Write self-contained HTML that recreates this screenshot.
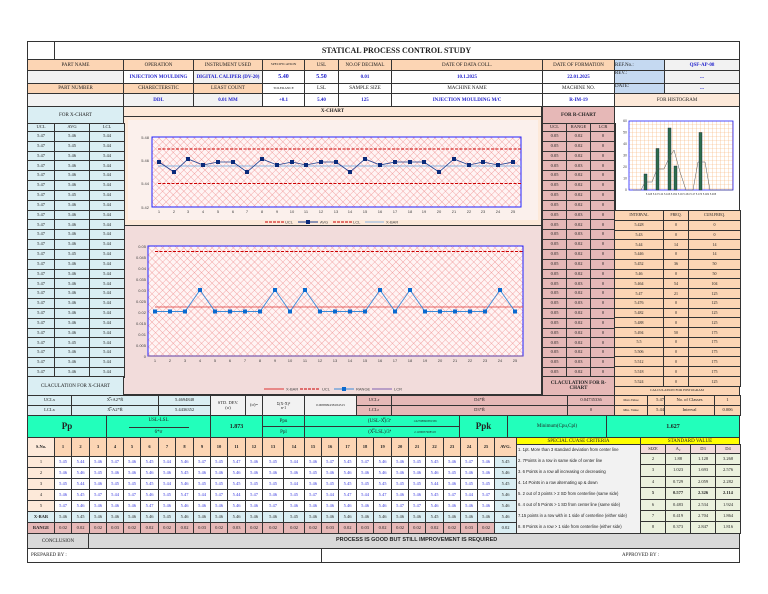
<!DOCTYPE html>
<html><head><meta charset="utf-8">
<style>
*{margin:0;padding:0;box-sizing:border-box}
body{width:768px;height:594px;background:#fff;font-family:"Liberation Serif",serif;position:relative;overflow:hidden;color:#222}
.a{position:absolute;border:1px solid #333;display:flex;align-items:center;justify-content:center;text-align:center;font-size:5px;line-height:1}
.b{color:#2222cc;font-weight:bold}
table{border-collapse:collapse;table-layout:fixed;position:absolute}
td{border:1px solid #333;font-size:4.5px;text-align:center;padding:0;overflow:hidden;white-space:nowrap;line-height:1}
.pe{background:#fcd5b4}.gy{background:#f2f2f2}.lb{background:#daeef3}.pk{background:#e6b8b7}
.gr{background:#22ffbb}.ye{background:#ffff00}.sv{background:#ebf1de}.bl{background:#c5d9f1}
.dv td{color:#3333dd}
.h td{font-size:4px}
</style></head><body>
<div style="position:absolute;left:27px;top:41px;width:713px;height:522px;border:1px solid #444"></div>
<div class="a" style="left:27px;top:41px;width:28px;height:19px"></div>
<div class="a" style="left:54px;top:41px;width:686px;height:19px;font-size:8px;font-weight:bold;border-left:none">STATICAL PROCESS CONTROL STUDY</div>
<div class="a pe" style="left:27px;top:59px;width:97px;height:12px">PART NAME</div>
<div class="a pe" style="left:123px;top:59px;width:71px;height:12px">OPERATION</div>
<div class="a pe" style="left:193px;top:59px;width:70px;height:12px">INSTRUMENT USED</div>
<div class="a pe" style="left:262px;top:59px;width:43px;height:12px;font-size:3.5px">SPECIFICATION</div>
<div class="a pe" style="left:304px;top:59px;width:35px;height:12px">USL</div>
<div class="a pe" style="left:338px;top:59px;width:54px;height:12px">NO.OF DECIMAL</div>
<div class="a pe" style="left:391px;top:59px;width:152px;height:12px">DATE OF DATA COLL.</div>
<div class="a pe" style="left:542px;top:59px;width:73px;height:12px">DATE OF FORMATION</div>
<div class="a bl" style="left:614px;top:59px;width:51px;height:12px;justify-content:flex-start">REF.No.:</div>
<div class="a gy b" style="left:664px;top:59px;width:76px;height:12px">QSF-AP-08</div>

<div class="a gy" style="left:27px;top:70px;width:97px;height:14px"></div>
<div class="a b" style="left:123px;top:70px;width:71px;height:14px">INJECTION MOULDING</div>
<div class="a gy b" style="left:193px;top:70px;width:70px;height:14px">DIGITAL CALIPER (DV-20)</div>
<div class="a b" style="left:262px;top:70px;width:43px;height:14px;font-size:6px">5.40</div>
<div class="a b" style="left:304px;top:70px;width:35px;height:14px;font-size:6px">5.50</div>
<div class="a b" style="left:338px;top:70px;width:54px;height:14px">0.01</div>
<div class="a b" style="left:391px;top:70px;width:152px;height:14px">10.1.2025</div>
<div class="a b" style="left:542px;top:70px;width:73px;height:14px">22.01.2025</div>
<div class="a bl" style="left:614px;top:70px;width:51px;height:14px;justify-content:flex-start;align-items:flex-start">REV.:</div>
<div class="a gy b" style="left:664px;top:70px;width:76px;height:14px">...</div>

<div class="a pe" style="left:27px;top:83px;width:97px;height:11px">PART NUMBER</div>
<div class="a pe" style="left:123px;top:83px;width:71px;height:11px">CHARECTERSTIC</div>
<div class="a pe" style="left:193px;top:83px;width:70px;height:11px">LEAST COUNT</div>
<div class="a" style="left:262px;top:83px;width:43px;height:11px;font-size:3.5px">TOLERANCE</div>
<div class="a" style="left:304px;top:83px;width:35px;height:11px">LSL</div>
<div class="a" style="left:338px;top:83px;width:54px;height:11px">SAMPLE SIZE</div>
<div class="a" style="left:391px;top:83px;width:152px;height:11px">MACHINE NAME</div>
<div class="a" style="left:542px;top:83px;width:73px;height:11px">MACHINE NO.</div>
<div class="a bl" style="left:614px;top:83px;width:51px;height:11px;justify-content:flex-start;align-items:flex-start">DATE:</div>
<div class="a gy b" style="left:664px;top:83px;width:76px;height:11px">...</div>

<div class="a gy" style="left:27px;top:93px;width:97px;height:14px"></div>
<div class="a gy b" style="left:123px;top:93px;width:71px;height:14px">DDL</div>
<div class="a gy b" style="left:193px;top:93px;width:70px;height:14px">0.01 MM</div>
<div class="a b" style="left:262px;top:93px;width:43px;height:14px">+0.1</div>
<div class="a b" style="left:304px;top:93px;width:35px;height:14px">5.40</div>
<div class="a b" style="left:338px;top:93px;width:54px;height:14px">125</div>
<div class="a b" style="left:391px;top:93px;width:152px;height:14px">INJECTION MOULDING M/C</div>
<div class="a b" style="left:542px;top:93px;width:73px;height:14px">R-IM-19</div>
<div class="a pe" style="left:614px;top:93px;width:126px;height:14px;background:#fde9d9">FOR HISTOGRAM</div>

<div style="position:absolute;left:123px;top:106px;width:419px;height:120px;background:#fde9d9;border:1px solid #333"></div>
<div class="a" style="left:123px;top:106px;width:419px;height:11px;background:#fde9d9;font-weight:bold;border-bottom:1px solid #333">X-CHART</div>
<div style="position:absolute;left:123px;top:225px;width:419px;height:170px;background:#f2dcdb;border:1px solid #333"></div>
<svg style="position:absolute;left:0;top:0" width="768" height="594">
<defs>
<pattern id="h" width="5" height="5" patternUnits="userSpaceOnUse" patternTransform="rotate(45)">
<rect width="5" height="5" fill="#fff4f4"/><path d="M0 0V5M0 0H5" stroke="#e88" stroke-width="0.7"/></pattern>
<pattern id="g" width="4" height="4" patternUnits="userSpaceOnUse">
<rect width="4" height="4" fill="#fff"/><path d="M0 0V4M0 0H4" stroke="#f8b070" stroke-width="0.6"/></pattern>
</defs>
<rect x="128" y="120" width="410" height="100" fill="#fbf0ec"/>
<rect x="152" y="137" width="369" height="70" fill="url(#h)" stroke="#22f" stroke-width="1"/>
<g font-size="4" font-family="Liberation Sans" fill="#444" text-anchor="end">
<text x="149" y="139">5.48</text><text x="149" y="162">5.46</text><text x="149" y="185">5.44</text><text x="149" y="209">5.42</text></g>
<line x1="158" y1="149" x2="521" y2="149" stroke="#c00" stroke-dasharray="3,1.5"/>
<line x1="158" y1="183.5" x2="521" y2="183.5" stroke="#c00" stroke-dasharray="3,1.5"/>
<line x1="158" y1="166" x2="521" y2="166" stroke="#8ab4e0"/>
<polyline fill="none" stroke="#1f3f8f" stroke-width="0.8" points="159,162 174,172 188,159 203,165 218,162 233,162 247,172 262,159 277,165 292,162 306,165 321,162 336,162 350,172 365,159 380,165 395,162 410,162 424,162 439,172 454,159 469,165 483,162 498,165 513,162"/>
<g fill="#0a2a7a">
<rect x="157" y="160" width="4" height="4"/><rect x="172" y="170" width="4" height="4"/><rect x="186" y="157" width="4" height="4"/><rect x="201" y="163" width="4" height="4"/><rect x="216" y="160" width="4" height="4"/><rect x="231" y="160" width="4" height="4"/><rect x="245" y="170" width="4" height="4"/><rect x="260" y="157" width="4" height="4"/><rect x="275" y="163" width="4" height="4"/><rect x="290" y="160" width="4" height="4"/><rect x="304" y="163" width="4" height="4"/><rect x="319" y="160" width="4" height="4"/><rect x="334" y="160" width="4" height="4"/><rect x="348" y="170" width="4" height="4"/><rect x="363" y="157" width="4" height="4"/><rect x="378" y="163" width="4" height="4"/><rect x="393" y="160" width="4" height="4"/><rect x="408" y="160" width="4" height="4"/><rect x="422" y="160" width="4" height="4"/><rect x="437" y="170" width="4" height="4"/><rect x="452" y="157" width="4" height="4"/><rect x="467" y="163" width="4" height="4"/><rect x="481" y="160" width="4" height="4"/><rect x="496" y="163" width="4" height="4"/><rect x="511" y="160" width="4" height="4"/></g>
<g font-size="4" font-family="Liberation Sans" fill="#444" text-anchor="middle">
<text x="159" y="213">1</text><text x="174" y="213">2</text><text x="188" y="213">3</text><text x="203" y="213">4</text><text x="218" y="213">5</text><text x="233" y="213">6</text><text x="247" y="213">7</text><text x="262" y="213">8</text><text x="277" y="213">9</text><text x="292" y="213">10</text><text x="306" y="213">11</text><text x="321" y="213">12</text><text x="336" y="213">13</text><text x="350" y="213">14</text><text x="365" y="213">15</text><text x="380" y="213">16</text><text x="395" y="213">17</text><text x="410" y="213">18</text><text x="424" y="213">19</text><text x="439" y="213">20</text><text x="454" y="213">21</text><text x="469" y="213">22</text><text x="483" y="213">23</text><text x="498" y="213">24</text><text x="513" y="213">25</text></g>
<g font-size="4" font-family="Liberation Sans" fill="#444">
<line x1="265" y1="222" x2="284" y2="222" stroke="#c00" stroke-dasharray="3,1"/><text x="285" y="223.5">UCL</text>
<line x1="298" y1="222" x2="318" y2="222" stroke="#1f3f8f"/><rect x="306" y="220" width="4" height="4" fill="#0a2a7a"/><text x="320" y="223.5">AVG</text>
<line x1="333" y1="222" x2="352" y2="222" stroke="#c00" stroke-dasharray="3,1"/><text x="353" y="223.5">LCL</text>
<line x1="365" y1="222" x2="384" y2="222" stroke="#8ab4e0"/><text x="386" y="223.5">X-BAR</text></g>

<rect x="148" y="246" width="375" height="110" fill="url(#h)" stroke="#22f" stroke-width="1"/>
<line x1="148" y1="356" x2="523" y2="356" stroke="#8060b0" stroke-width="1.2"/>
<g font-size="4" font-family="Liberation Sans" fill="#444" text-anchor="end">
<text x="146" y="248">0.05</text><text x="146" y="259">0.045</text><text x="146" y="270">0.04</text><text x="146" y="281">0.035</text><text x="146" y="292">0.03</text><text x="146" y="303">0.025</text><text x="146" y="314">0.02</text><text x="146" y="325">0.015</text><text x="146" y="336">0.01</text><text x="146" y="347">0.005</text><text x="146" y="358">0</text></g>
<line x1="155" y1="251.5" x2="523" y2="251.5" stroke="#c00" stroke-dasharray="3,1.5"/>
<line x1="155" y1="307" x2="523" y2="307" stroke="#d33" stroke-width="0.8"/>
<polyline fill="none" stroke="#3a8ad8" stroke-width="0.9" points="155,311.5 170,311.5 185,311.5 200,290 215,311.5 230,311.5 245,311.5 260,311.5 275,290 290,311.5 305,290 320,311.5 335,311.5 350,311.5 365,311.5 380,290 395,311.5 410,290 425,311.5 440,311.5 455,311.5 470,311.5 485,311.5 500,290 515,311.5"/>
<g fill="#0a6ad0">
<rect x="153" y="309.5" width="4" height="4"/><rect x="168" y="309.5" width="4" height="4"/><rect x="183" y="309.5" width="4" height="4"/><rect x="198" y="288" width="4" height="4"/><rect x="213" y="309.5" width="4" height="4"/><rect x="228" y="309.5" width="4" height="4"/><rect x="243" y="309.5" width="4" height="4"/><rect x="258" y="309.5" width="4" height="4"/><rect x="273" y="288" width="4" height="4"/><rect x="288" y="309.5" width="4" height="4"/><rect x="303" y="288" width="4" height="4"/><rect x="318" y="309.5" width="4" height="4"/><rect x="333" y="309.5" width="4" height="4"/><rect x="348" y="309.5" width="4" height="4"/><rect x="363" y="309.5" width="4" height="4"/><rect x="378" y="288" width="4" height="4"/><rect x="393" y="309.5" width="4" height="4"/><rect x="408" y="288" width="4" height="4"/><rect x="423" y="309.5" width="4" height="4"/><rect x="438" y="309.5" width="4" height="4"/><rect x="453" y="309.5" width="4" height="4"/><rect x="468" y="309.5" width="4" height="4"/><rect x="483" y="309.5" width="4" height="4"/><rect x="498" y="288" width="4" height="4"/><rect x="513" y="309.5" width="4" height="4"/></g>
<g font-size="4" font-family="Liberation Sans" fill="#444" text-anchor="middle">
<text x="155" y="362">1</text><text x="170" y="362">2</text><text x="185" y="362">3</text><text x="200" y="362">4</text><text x="215" y="362">5</text><text x="230" y="362">6</text><text x="245" y="362">7</text><text x="260" y="362">8</text><text x="275" y="362">9</text><text x="290" y="362">10</text><text x="305" y="362">11</text><text x="320" y="362">12</text><text x="335" y="362">13</text><text x="350" y="362">14</text><text x="365" y="362">15</text><text x="380" y="362">16</text><text x="395" y="362">17</text><text x="410" y="362">18</text><text x="425" y="362">19</text><text x="440" y="362">20</text><text x="455" y="362">21</text><text x="470" y="362">22</text><text x="485" y="362">23</text><text x="500" y="362">24</text><text x="515" y="362">25</text></g>
<g font-size="4" font-family="Liberation Sans" fill="#444">
<line x1="264" y1="389" x2="284" y2="389" stroke="#d33"/><text x="286" y="390.5">X-BAR</text>
<line x1="300" y1="389" x2="320" y2="389" stroke="#c00" stroke-dasharray="3,1"/><text x="322" y="390.5">UCL</text>
<line x1="334" y1="389" x2="354" y2="389" stroke="#3a8ad8"/><rect x="342" y="387" width="4" height="4" fill="#0a6ad0"/><text x="356" y="390.5">RANGE</text>
<line x1="372" y1="389" x2="392" y2="389" stroke="#8060b0"/><text x="394" y="390.5">LCR</text></g>

<rect x="616" y="108" width="122" height="102" fill="#fff"/>
<rect x="629" y="121" width="104" height="69" fill="url(#g)" stroke="#22f" stroke-width="0.8"/>
<g font-size="3.5" font-family="Liberation Sans" fill="#444" text-anchor="end">
<text x="627" y="122">60</text><text x="627" y="133.5">50</text><text x="627" y="145">40</text><text x="627" y="156.5">30</text><text x="627" y="168">20</text><text x="627" y="179.5">10</text><text x="627" y="191">0</text></g>
<g fill="#2e6e4e" stroke="#123" stroke-width="0.4">
<rect x="644" y="174" width="3" height="16"/><rect x="656" y="148.5" width="3" height="41.5"/><rect x="668" y="128" width="3" height="62"/><rect x="674" y="166" width="3" height="24"/><rect x="699" y="132.5" width="3" height="57.5"/></g>
<polyline fill="none" stroke="#555" stroke-width="0.5" points="633,190 637,190 641,190 645,182 652,182 657,169 664,169 669,158 674,150 680,172 686,190 693,190 698,162 705,162 710,190 733,190"/>
<text x="681" y="195" font-size="2.5" font-family="Liberation Sans" fill="#444" text-anchor="middle">5.428 5.43 5.44 5.446 5.452 5.46 5.464 5.47 5.476 5.482 5.488</text>
</svg>

<div class="a lb" style="left:27px;top:106px;width:97px;height:18px">FOR X-CHART</div>
<table class="lb" style="left:27px;top:123px;width:97px"><colgroup><col style="width:27px"><col style="width:35px"><col style="width:35px"></colgroup>
<tr style="height:8px"><td>UCL</td><td>AVG</td><td>LCL</td></tr>
<tr style="height:9.84px"><td>5.47</td><td>5.46</td><td>5.44</td></tr><tr style="height:9.84px"><td>5.47</td><td>5.45</td><td>5.44</td></tr><tr style="height:9.84px"><td>5.47</td><td>5.46</td><td>5.44</td></tr><tr style="height:9.84px"><td>5.47</td><td>5.46</td><td>5.44</td></tr><tr style="height:9.84px"><td>5.47</td><td>5.46</td><td>5.44</td></tr><tr style="height:9.84px"><td>5.47</td><td>5.46</td><td>5.44</td></tr><tr style="height:9.84px"><td>5.47</td><td>5.45</td><td>5.44</td></tr><tr style="height:9.84px"><td>5.47</td><td>5.46</td><td>5.44</td></tr><tr style="height:9.84px"><td>5.47</td><td>5.46</td><td>5.44</td></tr><tr style="height:9.84px"><td>5.47</td><td>5.46</td><td>5.44</td></tr><tr style="height:9.84px"><td>5.47</td><td>5.46</td><td>5.44</td></tr><tr style="height:9.84px"><td>5.47</td><td>5.46</td><td>5.44</td></tr><tr style="height:9.84px"><td>5.47</td><td>5.45</td><td>5.44</td></tr><tr style="height:9.84px"><td>5.47</td><td>5.46</td><td>5.44</td></tr><tr style="height:9.84px"><td>5.47</td><td>5.46</td><td>5.44</td></tr><tr style="height:9.84px"><td>5.47</td><td>5.46</td><td>5.44</td></tr><tr style="height:9.84px"><td>5.47</td><td>5.46</td><td>5.44</td></tr><tr style="height:9.84px"><td>5.47</td><td>5.46</td><td>5.44</td></tr><tr style="height:9.84px"><td>5.47</td><td>5.46</td><td>5.44</td></tr><tr style="height:9.84px"><td>5.47</td><td>5.46</td><td>5.44</td></tr><tr style="height:9.84px"><td>5.47</td><td>5.46</td><td>5.44</td></tr><tr style="height:9.84px"><td>5.47</td><td>5.45</td><td>5.44</td></tr><tr style="height:9.84px"><td>5.47</td><td>5.46</td><td>5.44</td></tr><tr style="height:9.84px"><td>5.47</td><td>5.46</td><td>5.44</td></tr><tr style="height:9.84px"><td>5.47</td><td>5.46</td><td>5.44</td></tr></table>
<div class="a lb" style="left:27px;top:376px;width:97px;height:20px">CLACULATION FOR X-CHART</div>

<div class="a pk" style="left:542px;top:106px;width:73px;height:18px;font-weight:bold">FOR R-CHART</div>
<table class="pk" style="left:542px;top:123px;width:73px"><colgroup><col style="width:24px"><col style="width:24px"><col style="width:25px"></colgroup>
<tr style="height:8px"><td>UCL</td><td>RANGE</td><td>LCR</td></tr>
<tr style="height:9.84px"><td>0.05</td><td>0.02</td><td>0</td></tr><tr style="height:9.84px"><td>0.05</td><td>0.02</td><td>0</td></tr><tr style="height:9.84px"><td>0.05</td><td>0.02</td><td>0</td></tr><tr style="height:9.84px"><td>0.05</td><td>0.03</td><td>0</td></tr><tr style="height:9.84px"><td>0.05</td><td>0.02</td><td>0</td></tr><tr style="height:9.84px"><td>0.05</td><td>0.02</td><td>0</td></tr><tr style="height:9.84px"><td>0.05</td><td>0.02</td><td>0</td></tr><tr style="height:9.84px"><td>0.05</td><td>0.02</td><td>0</td></tr><tr style="height:9.84px"><td>0.05</td><td>0.03</td><td>0</td></tr><tr style="height:9.84px"><td>0.05</td><td>0.02</td><td>0</td></tr><tr style="height:9.84px"><td>0.05</td><td>0.03</td><td>0</td></tr><tr style="height:9.84px"><td>0.05</td><td>0.02</td><td>0</td></tr><tr style="height:9.84px"><td>0.05</td><td>0.02</td><td>0</td></tr><tr style="height:9.84px"><td>0.05</td><td>0.02</td><td>0</td></tr><tr style="height:9.84px"><td>0.05</td><td>0.02</td><td>0</td></tr><tr style="height:9.84px"><td>0.05</td><td>0.03</td><td>0</td></tr><tr style="height:9.84px"><td>0.05</td><td>0.02</td><td>0</td></tr><tr style="height:9.84px"><td>0.05</td><td>0.03</td><td>0</td></tr><tr style="height:9.84px"><td>0.05</td><td>0.02</td><td>0</td></tr><tr style="height:9.84px"><td>0.05</td><td>0.02</td><td>0</td></tr><tr style="height:9.84px"><td>0.05</td><td>0.02</td><td>0</td></tr><tr style="height:9.84px"><td>0.05</td><td>0.02</td><td>0</td></tr><tr style="height:9.84px"><td>0.05</td><td>0.02</td><td>0</td></tr><tr style="height:9.84px"><td>0.05</td><td>0.03</td><td>0</td></tr><tr style="height:9.84px"><td>0.05</td><td>0.02</td><td>0</td></tr></table>
<div class="a pk" style="left:542px;top:376px;width:73px;height:20px;font-weight:bold">CLACULATION FOR R-CHART</div>

<div style="position:absolute;left:614px;top:106px;width:126px;height:105px;border:1px solid #333"></div>
<table class="pe h" style="left:614px;top:210px;width:126px;height:177px"><colgroup><col style="width:49px"><col style="width:25px"><col style="width:52px"></colgroup>
<tr><td>INTERVAL</td><td>FREQ.</td><td>CUM.FREQ.</td></tr>
<tr><td>5.428</td><td>0</td><td>0</td></tr><tr><td>5.43</td><td>0</td><td>0</td></tr><tr><td>5.44</td><td>14</td><td>14</td></tr><tr><td>5.446</td><td>0</td><td>14</td></tr><tr><td>5.452</td><td>36</td><td>50</td></tr><tr><td>5.46</td><td>0</td><td>50</td></tr><tr><td>5.464</td><td>54</td><td>104</td></tr><tr><td>5.47</td><td>21</td><td>125</td></tr><tr><td>5.476</td><td>0</td><td>125</td></tr><tr><td>5.482</td><td>0</td><td>125</td></tr><tr><td>5.488</td><td>0</td><td>125</td></tr><tr><td>5.494</td><td>50</td><td>175</td></tr><tr><td>5.5</td><td>0</td><td>175</td></tr><tr><td>5.506</td><td>0</td><td>175</td></tr><tr><td>5.512</td><td>0</td><td>175</td></tr><tr><td>5.518</td><td>0</td><td>175</td></tr><tr><td>5.524</td><td>0</td><td>125</td></tr></table>
<div class="a pe" style="left:614px;top:386px;width:126px;height:10px;font-size:3.5px">CALCULATION FOR HISTOGRAM</div>

<table style="left:27px;top:395px;width:713px" class="lb">
<colgroup><col style="width:44px"><col style="width:87px"><col style="width:52px"><col style="width:35px"><col style="width:17px"><col style="width:42px"><col style="width:52px"><col style="width:35px"><col style="width:176px"><col style="width:47px"><col style="width:33px"><col style="width:17px"><col style="width:50px"><col style="width:26px"></colgroup>
<tr style="height:10px"><td>UCLx</td><td>X̿+A2*R̄</td><td>5.4694848</td><td rowspan="2" class="gy">STD. DEV.<br>(σ)</td><td rowspan="2" class="gy">(σ)=</td><td rowspan="2" class="gy" style="font-size:4px">Σ(X-X̄)²<br>n-1</td><td rowspan="2" class="gy" style="font-size:3.5px">0.008899438184515</td><td class="pk">UCLr</td><td class="pk">D4*R̄</td><td class="pk">0.04735336</td><td class="pe" style="font-size:3.5px">Max.Value</td><td class="pe" style="text-align:right">5.47</td><td class="pe">No. of Classes</td><td class="pe">1</td></tr>
<tr style="height:10px"><td>LCLx</td><td>X̿-A2*R̄</td><td>5.4436352</td><td class="pk">LCLr</td><td class="pk">D3*R̄</td><td class="pk">0</td><td class="pe" style="font-size:3.5px">Min. Value</td><td class="pe" style="text-align:right">5.44</td><td class="pe">Interval</td><td class="pe">0.006</td></tr>
</table>

<div class="a gr" style="left:27px;top:415px;width:80px;height:23px;font-size:9px;font-weight:bold">Pp</div>
<div class="a gr" style="left:106px;top:415px;width:105px;height:23px;font-size:5px;flex-direction:column;gap:4px"><span>USL-LSL</span><span style="border-top:0.5px solid #333;padding-top:2px;width:60px">6*σ</span></div>
<div class="a gr" style="left:210px;top:415px;width:53px;height:23px;font-weight:bold;font-size:6px">1.873</div>
<div class="a gr" style="left:262px;top:415px;width:43px;height:12px">Ppu</div>
<div class="a gr" style="left:262px;top:426px;width:43px;height:12px">Ppl</div>
<div class="a gr" style="left:304px;top:415px;width:155px;height:12px">(USL-X̿)/3*σ</div>
<div class="a gr" style="left:304px;top:426px;width:155px;height:12px">(X̿-LSL)/3*σ</div>
<div class="a gr" style="left:391px;top:415px;width:69px;height:12px;font-size:3px;border-left:none">1.62708690381336</div>
<div class="a gr" style="left:391px;top:426px;width:69px;height:12px;font-size:3px;border-left:none">2.1186857908518</div>
<div class="a gr" style="left:459px;top:415px;width:49px;height:23px;font-size:9px;font-weight:bold">Ppk</div>
<div class="a gr" style="left:507px;top:415px;width:100px;height:23px">Minimum(Cpu,Cpl)</div>
<div class="a gr" style="left:606px;top:415px;width:134px;height:23px;font-weight:bold;font-size:6px">1.627</div>

<table style="left:27px;top:437px;width:490px">
<colgroup><col style="width:27px"><col style="width:17px"><col style="width:18px"><col style="width:17px"><col style="width:17px"><col style="width:17px"><col style="width:18px"><col style="width:17px"><col style="width:18px"><col style="width:17px"><col style="width:17px"><col style="width:18px"><col style="width:17px"><col style="width:21px"><col style="width:21px"><col style="width:17px"><col style="width:17px"><col style="width:18px"><col style="width:17px"><col style="width:18px"><col style="width:17px"><col style="width:17px"><col style="width:18px"><col style="width:17px"><col style="width:17px"><col style="width:17px"><col style="width:22px"></colgroup>
<tr style="height:19px;font-weight:bold" class="pe"><td style="background:#fde9d9">S.No.</td><td>1</td><td>2</td><td>3</td><td>4</td><td>5</td><td>6</td><td>7</td><td>8</td><td>9</td><td>10</td><td>11</td><td>12</td><td>13</td><td>14</td><td>15</td><td>16</td><td>17</td><td>18</td><td>19</td><td>20</td><td>21</td><td>22</td><td>23</td><td>24</td><td>25</td><td>AVG.</td></tr>
<tr style="height:11px" class="dv"><td style="background:#fde9d9;color:#222">1</td><td>5.45</td><td>5.44</td><td>5.46</td><td>5.47</td><td>5.46</td><td>5.45</td><td>5.44</td><td>5.46</td><td>5.47</td><td>5.45</td><td>5.47</td><td>5.46</td><td>5.45</td><td>5.44</td><td>5.46</td><td>5.47</td><td>5.45</td><td>5.47</td><td>5.46</td><td>5.46</td><td>5.45</td><td>5.45</td><td>5.46</td><td>5.47</td><td>5.46</td><td class="lb" style="color:#222">5.45</td></tr>
<tr style="height:11px" class="dv"><td style="background:#fde9d9;color:#222">2</td><td>5.46</td><td>5.46</td><td>5.45</td><td>5.46</td><td>5.46</td><td>5.46</td><td>5.46</td><td>5.45</td><td>5.46</td><td>5.46</td><td>5.46</td><td>5.46</td><td>5.46</td><td>5.46</td><td>5.45</td><td>5.46</td><td>5.46</td><td>5.46</td><td>5.46</td><td>5.46</td><td>5.46</td><td>5.46</td><td>5.45</td><td>5.46</td><td>5.46</td><td class="lb" style="color:#222">5.46</td></tr>
<tr style="height:11px" class="dv"><td style="background:#fde9d9;color:#222">3</td><td>5.45</td><td>5.44</td><td>5.46</td><td>5.45</td><td>5.45</td><td>5.45</td><td>5.44</td><td>5.46</td><td>5.45</td><td>5.45</td><td>5.45</td><td>5.45</td><td>5.45</td><td>5.44</td><td>5.46</td><td>5.45</td><td>5.45</td><td>5.45</td><td>5.45</td><td>5.45</td><td>5.45</td><td>5.44</td><td>5.46</td><td>5.45</td><td>5.45</td><td class="lb" style="color:#222">5.45</td></tr>
<tr style="height:11px" class="dv"><td style="background:#fde9d9;color:#222">4</td><td>5.46</td><td>5.45</td><td>5.47</td><td>5.44</td><td>5.47</td><td>5.46</td><td>5.45</td><td>5.47</td><td>5.44</td><td>5.47</td><td>5.44</td><td>5.47</td><td>5.46</td><td>5.45</td><td>5.47</td><td>5.44</td><td>5.47</td><td>5.44</td><td>5.47</td><td>5.46</td><td>5.46</td><td>5.45</td><td>5.47</td><td>5.44</td><td>5.47</td><td class="lb" style="color:#222">5.46</td></tr>
<tr style="height:11px" class="dv"><td style="background:#fde9d9;color:#222">5</td><td>5.47</td><td>5.46</td><td>5.46</td><td>5.46</td><td>5.46</td><td>5.47</td><td>5.46</td><td>5.46</td><td>5.46</td><td>5.46</td><td>5.46</td><td>5.46</td><td>5.47</td><td>5.46</td><td>5.46</td><td>5.46</td><td>5.46</td><td>5.46</td><td>5.46</td><td>5.47</td><td>5.47</td><td>5.46</td><td>5.46</td><td>5.46</td><td>5.46</td><td class="lb" style="color:#222">5.46</td></tr>
<tr style="height:11px" class="lb"><td style="font-weight:bold">X-BAR</td><td>5.46</td><td>5.45</td><td>5.46</td><td>5.46</td><td>5.46</td><td>5.46</td><td>5.45</td><td>5.46</td><td>5.46</td><td>5.46</td><td>5.46</td><td>5.46</td><td>5.46</td><td>5.45</td><td>5.46</td><td>5.46</td><td>5.46</td><td>5.46</td><td>5.46</td><td>5.46</td><td>5.46</td><td>5.45</td><td>5.46</td><td>5.46</td><td>5.46</td><td>5.46</td></tr>
<tr style="height:12px" class="pk"><td style="font-weight:bold">RANGE</td><td>0.02</td><td>0.02</td><td>0.02</td><td>0.03</td><td>0.02</td><td>0.02</td><td>0.02</td><td>0.02</td><td>0.03</td><td>0.02</td><td>0.03</td><td>0.02</td><td>0.02</td><td>0.02</td><td>0.02</td><td>0.03</td><td>0.02</td><td>0.03</td><td>0.02</td><td>0.02</td><td>0.02</td><td>0.02</td><td>0.02</td><td>0.03</td><td>0.02</td><td class="lb">0.02</td></tr>
</table>

<div class="a ye" style="left:516px;top:437px;width:125px;height:8px">SPECIAL CUASE CRITERIA</div>
<div class="a gy" style="left:516px;top:444px;width:125px;height:90px;flex-direction:column;align-items:flex-start;justify-content:space-around;font-size:4.2px;font-family:'Liberation Sans',sans-serif;text-align:left;padding-left:1px">
<span>1. 1pt. More than 3 standard deviation from center line</span><span>2. 7Points in a row in same side of center line</span><span>3. 6 Points in a row all increasing or decreasing</span><span>4. 14 Points in a row alternating up &amp; down</span><span>5. 2 out of 3 points &gt; 2 SD from centerline (same side)</span><span>6. 4 out of 5 Points &gt; 1 SD from center line (same side)</span><span>7.15 points in a row with in 1 side of centerline (either side)</span><span>8. 8 Points in a row &gt; 1 side from centerline (either side)</span></div>
<div class="a ye" style="left:640px;top:437px;width:100px;height:8px">STANDARD VALUE</div>
<table class="sv" style="left:640px;top:444px;width:100px"><colgroup><col style="width:25px"><col style="width:25px"><col style="width:25px"><col style="width:25px"></colgroup>
<tr style="height:9px;background:#f2dcdb"><td>SIZE</td><td>A₂</td><td>D3</td><td>D4</td></tr>
<tr style="height:11.4px"><td>2</td><td>1.88</td><td>1.128</td><td>3.268</td></tr>
<tr style="height:11.4px"><td>3</td><td>1.023</td><td>1.693</td><td>2.576</td></tr>
<tr style="height:11.4px"><td>4</td><td>0.729</td><td>2.059</td><td>2.282</td></tr>
<tr style="height:11.4px;font-weight:bold"><td>5</td><td>0.577</td><td>2.326</td><td>2.114</td></tr>
<tr style="height:11.4px"><td>6</td><td>0.483</td><td>2.534</td><td>1.924</td></tr>
<tr style="height:11.4px"><td>7</td><td>0.419</td><td>2.704</td><td>1.864</td></tr>
<tr style="height:11.4px"><td>8</td><td>0.373</td><td>2.847</td><td>1.816</td></tr></table>

<div class="a" style="left:27px;top:533px;width:62px;height:16px;background:#d9d9d9">CONCLUSION</div>
<div class="a" style="left:88px;top:533px;width:652px;height:16px;background:#d9d9d9;font-weight:bold;font-family:'Liberation Sans',sans-serif;font-size:5.5px;justify-content:flex-start;padding-left:247px">PROCESS IS GOOD BUT STILL IMPROVEMENT IS REQUIRED</div>
<div class="a" style="left:27px;top:548px;width:295px;height:15px;justify-content:flex-start;padding-left:3px">PREPARED BY :</div>
<div class="a" style="left:321px;top:548px;width:419px;height:15px;justify-content:flex-start;padding-left:300px">APPROVED BY :</div>
</body></html>
